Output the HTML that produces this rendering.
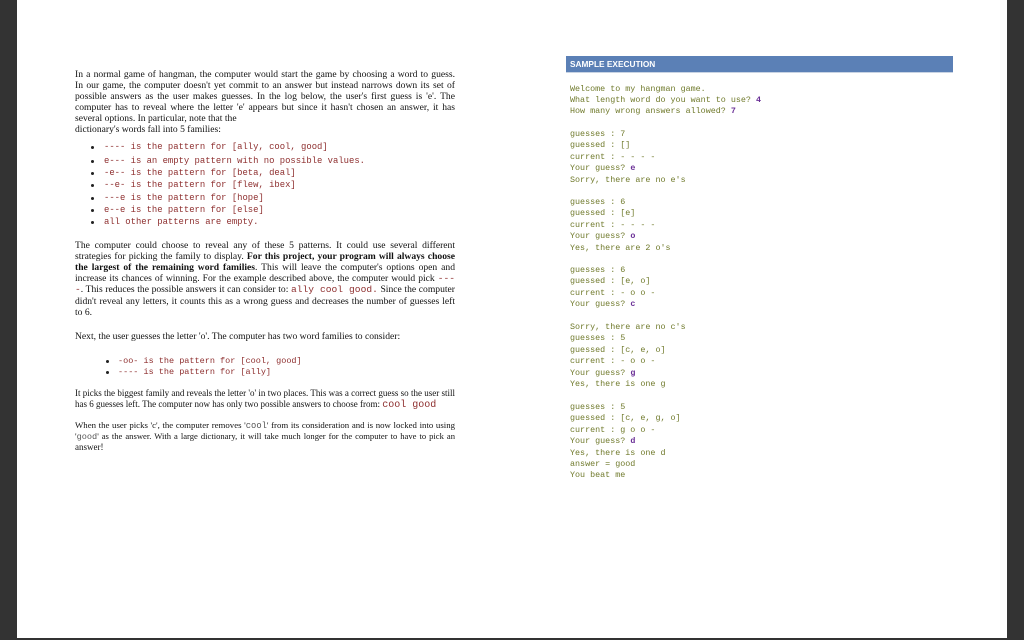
<!DOCTYPE html>
<html><head><meta charset="utf-8"><style>
body{margin:0;width:1024px;height:640px;background:#fff;position:relative;overflow:hidden}
.lb{position:absolute;left:0;top:0;width:17px;height:640px;background:#333}
.rb{position:absolute;left:1007px;top:0;width:17px;height:640px;background:#333}
.bb{position:absolute;left:0;top:638px;width:1024px;height:2px;background:#333}
.s{position:absolute;font-family:"Liberation Serif",serif;font-size:9.6px;color:#111;white-space:nowrap;line-height:11px}
.j{width:380px;text-align:justify;text-align-last:justify;white-space:normal}
.m{font-family:"Liberation Mono",monospace;color:#8e2f2f}
.c{position:absolute;font-family:"Liberation Mono",monospace;font-size:8.9px;color:#8e2f2f;white-space:pre;line-height:11px}
.d{position:absolute;width:3px;height:3px;border-radius:50%;background:#222}
.g{position:absolute;left:570px;font-family:"Liberation Mono",monospace;font-size:8.4px;color:#707a2c;white-space:pre;line-height:11px}
.g b{color:#6a2f96}
.hd{position:absolute;left:566px;top:56px;width:387px;height:16px;background:#5b80b6;border-bottom:1px solid #c8d3e3}
.hd span{position:absolute;left:4px;top:3px;font:bold 8.3px "Liberation Sans",sans-serif;color:#fff}
</style></head><body>
<div class="lb"></div><div class="rb"></div><div class="bb"></div>

<div class="s j" style="left:75px;top:69px">In a normal game of hangman, the computer would start the game by choosing a word to guess.</div>
<div class="s j" style="left:75px;top:80px">In our game, the computer doesn't yet commit to an answer but instead narrows down its set of</div>
<div class="s j" style="left:75px;top:91px">possible answers as the user makes guesses. In the log below, the user's first guess is 'e'. The</div>
<div class="s j" style="left:75px;top:102px">computer has to reveal where the letter 'e' appears but since it hasn't chosen an answer, it has</div>
<div class="s" style="left:75px;top:113px">several options. In particular, note that the</div>
<div class="s" style="left:75px;top:124px">dictionary's words fall into 5 families:</div>

<div class="d" style="left:91px;top:146px"></div><div class="c" style="left:104px;top:142px">---- is the pattern for [ally, cool, good]</div>
<div class="d" style="left:91px;top:160px"></div><div class="c" style="left:104px;top:156px">e--- is an empty pattern with no possible values.</div>
<div class="d" style="left:91px;top:172px"></div><div class="c" style="left:104px;top:168px">-e-- is the pattern for [beta, deal]</div>
<div class="d" style="left:91px;top:184px"></div><div class="c" style="left:104px;top:180px">--e- is the pattern for [flew, ibex]</div>
<div class="d" style="left:91px;top:197px"></div><div class="c" style="left:104px;top:193px">---e is the pattern for [hope]</div>
<div class="d" style="left:91px;top:209px"></div><div class="c" style="left:104px;top:205px">e--e is the pattern for [else]</div>
<div class="d" style="left:91px;top:221px"></div><div class="c" style="left:104px;top:217px">all other patterns are empty.</div>

<div class="s j" style="left:75px;top:240px">The computer could choose to reveal any of these 5 patterns. It could use several different</div>
<div class="s j" style="left:75px;top:251px">strategies for picking the family to display. <b>For this project, your program will always choose</b></div>
<div class="s j" style="left:75px;top:262px"><b>the largest of the remaining word families</b>. This will leave the computer's options open and</div>
<div class="s j" style="left:75px;top:273px">increase its chances of winning. For the example described above, the computer would pick <span class="m">---</span></div>
<div class="s j" style="left:75px;top:284px"><span class="m">-</span>. This reduces the possible answers it can consider to: <span class="m">ally cool good.</span> Since the computer</div>
<div class="s j" style="left:75px;top:296px">didn't reveal any letters, it counts this as a wrong guess and decreases the number of guesses left</div>
<div class="s" style="left:75px;top:307px">to 6.</div>

<div class="s" style="left:75px;top:331px">Next, the user guesses the letter 'o'. The computer has two word families to consider:</div>
<div class="d" style="left:106px;top:360px"></div><div class="c" style="left:118px;top:356px;font-size:8.5px">-oo- is the pattern for [cool, good]</div>
<div class="d" style="left:106px;top:371px"></div><div class="c" style="left:118px;top:367px;font-size:8.5px">---- is the pattern for [ally]</div>

<div class="s j" style="left:75px;top:388px;font-size:9px">It picks the biggest family and reveals the letter 'o' in two places. This was a correct guess so the user still</div>
<div class="s" style="left:75px;top:399px;font-size:9px">has 6 guesses left. The computer now has only two possible answers to choose from: <span class="m" style="font-size:10px">cool good</span></div>
<div class="s j" style="left:75px;top:420px;font-size:8.8px">When the user picks 'c', the computer removes '<span class="m" style="color:#555">cool</span>' from its consideration and is now locked into using</div>
<div class="s j" style="left:75px;top:431px;font-size:8.6px">'<span class="m" style="color:#555">good</span>' as the answer. With a large dictionary, it will take much longer for the computer to have to pick an</div>
<div class="s" style="left:75px;top:442px;font-size:9px">answer!</div>

<div class="hd"><span>SAMPLE EXECUTION</span></div>
<div class="g" style="top:84px">Welcome to my hangman game.
What length word do you want to use? <b>4</b>
How many wrong answers allowed? <b>7</b></div>
<div class="g" style="top:129px;line-height:11.4px">guesses : 7
guessed : []
current : - - - -
Your guess? <b>e</b>
Sorry, there are no e's</div>
<div class="g" style="top:197px;line-height:11.4px">guesses : 6
guessed : [e]
current : - - - -
Your guess? <b>o</b>
Yes, there are 2 o's</div>
<div class="g" style="top:265px;line-height:11.4px">guesses : 6
guessed : [e, o]
current : - o o -
Your guess? <b>c</b></div>
<div class="g" style="top:322px;line-height:11.4px">Sorry, there are no c's
guesses : 5
guessed : [c, e, o]
current : - o o -
Your guess? <b>g</b>
Yes, there is one g</div>
<div class="g" style="top:402px;line-height:11.4px">guesses : 5
guessed : [c, e, g, o]
current : g o o -
Your guess? <b>d</b>
Yes, there is one d
answer = good
You beat me</div>
</body></html>
